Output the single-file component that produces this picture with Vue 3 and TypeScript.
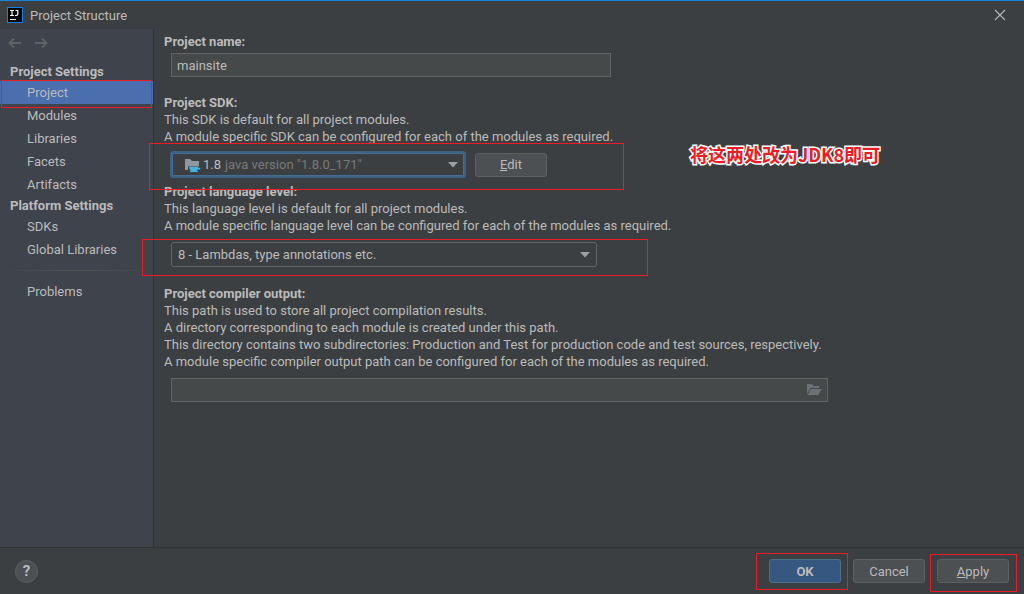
<script setup lang="ts">
import { ref } from 'vue'

interface NavGroup {
  title: string
  items: string[]
}

const groups: NavGroup[] = [
  { title: 'Project Settings', items: ['Project', 'Modules', 'Libraries', 'Facets', 'Artifacts'] },
  { title: 'Platform Settings', items: ['SDKs', 'Global Libraries'] },
]

const selected = ref('Project')
const projectName = ref('mainsite')
const sdk = ref('1.8')
const level = ref('8 - Lambdas, type annotations etc.')
const outputPath = ref('')
</script>

<template>
  <div class="dialog">
    <header class="titlebar">
      <svg class="logo" width="16" height="16" viewBox="0 0 16 16" aria-hidden="true">
        <rect x="0.5" y="0.5" width="15" height="15" fill="#000" stroke="#147fee" />
        <path d="M3 3.5h4M5 3.5v5M3 8.5h4M8.500 3.5h2.300v3.600q0 1.400-1.400 1.400H8" fill="none" stroke="#fff" stroke-width="1.200" />
        <path d="M3 12.5h6" stroke="#fff" stroke-width="1" />
      </svg>
      <h1>Project Structure</h1>
      <button class="close" type="button" aria-label="Close">
        <svg width="12" height="12" viewBox="0 0 12 12"><path d="M1 1l10 10M11 1L1 11" stroke="#b4b6b7" stroke-width="1.1" /></svg>
      </button>
    </header>

    <div class="body">
      <nav class="sidebar">
        <div class="history">
          <button type="button" aria-label="Back">
            <svg width="14" height="12" viewBox="0 0 14 12"><path d="M13 6H1.5M6 1.5L1.5 6L6 10.5" fill="none" stroke="#606366" stroke-width="1.8" /></svg>
          </button>
          <button type="button" aria-label="Forward">
            <svg width="14" height="12" viewBox="0 0 14 12"><path d="M1 6h11.5M8 1.5L12.5 6L8 10.5" fill="none" stroke="#606366" stroke-width="1.8" /></svg>
          </button>
        </div>
        <section v-for="group in groups" :key="group.title">
          <h2>{{ group.title }}</h2>
          <ul>
            <li v-for="item in group.items" :key="item">
              <button class="item" :class="{ active: selected === item }" type="button" @click="selected = item">{{ item }}</button>
              <span v-if="item === 'Project'" class="mark mark-nav"></span>
            </li>
          </ul>
        </section>
        <hr />
        <button class="item" :class="{ active: selected === 'Problems' }" type="button" @click="selected = 'Problems'">Problems</button>
      </nav>

      <main class="content">
        <section class="field">
          <label class="label" for="name">Project name:</label>
          <input id="name" v-model="projectName" class="box name" type="text" />
        </section>

        <section class="field">
          <label class="label" for="sdk">Project SDK:</label>
          <p>This SDK is default for all project modules.</p>
          <p>A module specific SDK can be configured for each of the modules as required.</p>
          <div class="row sdk-row">
            <div class="combo sdk">
              <svg class="folder" width="17" height="16" viewBox="0 0 17 16" aria-hidden="true">
                <path d="M1 2h5l2 2h7v5.500H4V13H1z" fill="#8d989f" />
                <path d="M5 10h9v.7h2.300v1.800h-2.600q-.7 1-1.700 1.300h2V15H6v-1.200h1.200Q5 13 5 10z" fill="#40b6e0" />
              </svg>
              <select id="sdk" v-model="sdk">
                <option>1.8</option>
              </select>
              <span class="version">java version "1.8.0_171"</span>
              <svg class="arrow" width="10" height="6" viewBox="0 0 10 6" aria-hidden="true"><path d="M0 0h10L5 5.500z" fill="#9da0a2" /></svg>
            </div>
            <button class="btn" type="button"><u>E</u>dit</button>
            <span class="mark mark-sdk"></span>
          </div>
        </section>

        <section class="field">
          <label class="label" for="level">Project language level:</label>
          <p>This language level is default for all project modules.</p>
          <p>A module specific language level can be configured for each of the modules as required.</p>
          <div class="row level-row">
            <div class="combo level">
              <select id="level" v-model="level">
                <option>8 - Lambdas, type annotations etc.</option>
              </select>
              <svg class="arrow" width="10" height="6" viewBox="0 0 10 6" aria-hidden="true"><path d="M0 0h10L5 5.500z" fill="#9da0a2" /></svg>
            </div>
            <span class="mark mark-level"></span>
          </div>
        </section>

        <section class="field">
          <label class="label" for="output">Project compiler output:</label>
          <p>This path is used to store all project compilation results.</p>
          <p>A directory corresponding to each module is created under this path.</p>
          <p>This directory contains two subdirectories: Production and Test for production code and test sources, respectively.</p>
          <p>A module specific compiler output path can be configured for each of the modules as required.</p>
          <div class="box output">
            <input id="output" v-model="outputPath" type="text" />
            <button type="button" aria-label="Browse">
              <svg width="16" height="12" viewBox="0 0 16 12"><path d="M1 0h5l1.500 2H13v2H4.500L1 10z" fill="#6b7276" /><path d="M5 5h10.500L12.500 11H1.500z" fill="#6b7276" /></svg>
            </button>
          </div>
        </section>

        <strong class="note">将这两处改为JDK8即可</strong>
      </main>
    </div>

    <footer class="footer">
      <button class="help" type="button" aria-label="Help">?</button>
      <div class="actions">
        <span class="action"><button class="btn primary" type="button">OK</button><span class="mark mark-ok"></span></span>
        <span class="action"><button class="btn" type="button">Cancel</button></span>
        <span class="action"><button class="btn" type="button"><u>A</u>pply</button><span class="mark mark-apply"></span></span>
      </div>
    </footer>
  </div>
</template>

<style>
body {
  margin: 0;
  background: #3c3f41;
}
</style>

<style scoped>
* {
  box-sizing: border-box;
}
.dialog {
  display: flex;
  flex-direction: column;
  min-height: 100vh;
  border-top: 1px solid #1883d7;
  background: #3c3f41;
  color: #bbbbbb;
  font: 13px/17px Roboto, "Noto Sans CJK SC", sans-serif;
}
button,
input,
select {
  margin: 0;
  padding: 0;
  border: 0;
  background: none;
  color: inherit;
  font: inherit;
  outline: 0;
}
.titlebar {
  display: flex;
  align-items: center;
  height: 28px;
  padding: 0 18px 0 7px;
}
h1 {
  flex: 1;
  margin: 0 0 0 7px;
  font-size: 13px;
  font-weight: 400;
}
.close {
  display: flex;
}
.body {
  display: flex;
  flex: 1;
}
.sidebar {
  flex: none;
  width: 154px;
  border-right: 1px solid #323232;
  background: #3e434c;
}
.history {
  display: flex;
  align-items: center;
  gap: 12px;
  height: 28px;
  margin-bottom: 5px;
  padding-left: 8px;
}
.history button {
  display: flex;
}
h2 {
  margin: 0;
  padding-left: 10px;
  font-size: 13px;
  line-height: 19px;
}
ul {
  margin: 0;
  padding: 0;
  list-style: none;
}
li {
  position: relative;
}
.item {
  display: block;
  width: 100%;
  height: 23px;
  padding-left: 27px;
  text-align: left;
}
.item.active {
  background: #4b6eaf;
}
hr {
  height: 1px;
  margin: 9px 0;
  border: 0;
  background: linear-gradient(90deg, transparent, #555555 50%, transparent);
}
.content {
  position: relative;
  flex: 1;
  padding: 4px 10px 16px;
}
.field {
  margin-bottom: 17px;
}
.label {
  display: block;
  font-weight: 700;
}
p {
  margin: 0;
}
.box {
  display: flex;
  align-items: center;
  height: 24px;
  margin-left: 7px;
  border: 1px solid #646464;
  background: #45494a;
}
.name {
  width: 440px;
  margin-top: 3px;
  padding: 0 5px;
}
.output {
  width: 657px;
  margin-top: 8px;
  padding: 0 5px;
}
.output input {
  flex: 1;
}
.output button {
  display: flex;
}
.row {
  position: relative;
  display: flex;
  align-items: center;
  width: max-content;
}
.sdk-row {
  gap: 9px;
  margin: 6px 0 -12px 6px;
}
.level-row {
  margin: 8px 0 18px 7px;
}
.combo {
  position: relative;
  display: flex;
  align-items: center;
  border: 1px solid #646464;
  border-radius: 3px;
}
.combo select {
  width: 100%;
  height: 23px;
  appearance: none;
}
.combo option {
  background: #3c3f41;
}
.sdk {
  width: 296px;
  border: 2px solid #3d6185;
  box-shadow: inset 0 0 0 1px #466d94;
}
.sdk select {
  padding-left: 31px;
}
.level {
  width: 426px;
}
.level select {
  padding-left: 6px;
}
.folder,
.version,
.arrow {
  position: absolute;
  pointer-events: none;
}
.folder {
  left: 12px;
}
.version {
  left: 53px;
  color: #787878;
}
.arrow {
  right: 6px;
}
.btn {
  width: 72px;
  height: 24px;
  border: 1px solid #5e6060;
  border-radius: 3px;
  background: #4c5052;
}
.btn.primary {
  border-color: #4c708c;
  background: #365880;
  font-weight: 700;
}
.mark {
  position: absolute;
  border: 1px solid #ed1c24;
  pointer-events: none;
}
.mark-nav {
  inset: -1px 1px -4px 1px;
}
.mark-sdk {
  inset: -8px -77px -12px -21px;
}
.mark-level {
  inset: -3px -51px -9px -29px;
}
.mark-ok {
  inset: -6px -7px -7px -13px;
}
.mark-apply {
  inset: -5px -8px -9px -7px;
}
.note {
  position: absolute;
  top: 112px;
  left: 536px;
  color: #ed1c24;
  font: 700 18px/26px "Noto Sans CJK SC", sans-serif;
  -webkit-text-stroke: 3px #ffffff;
  paint-order: stroke fill;
}
.footer {
  display: flex;
  align-items: center;
  justify-content: space-between;
  height: 47px;
  padding: 0 15px;
  border-top: 1px solid #323232;
}
.help {
  width: 23px;
  height: 23px;
  border: 1px solid #5e6060;
  border-radius: 50%;
  background: #4c5052;
  font-size: 15px;
  font-weight: 700;
}
.actions {
  display: flex;
  gap: 12px;
}
.action {
  position: relative;
  display: flex;
}
</style>
